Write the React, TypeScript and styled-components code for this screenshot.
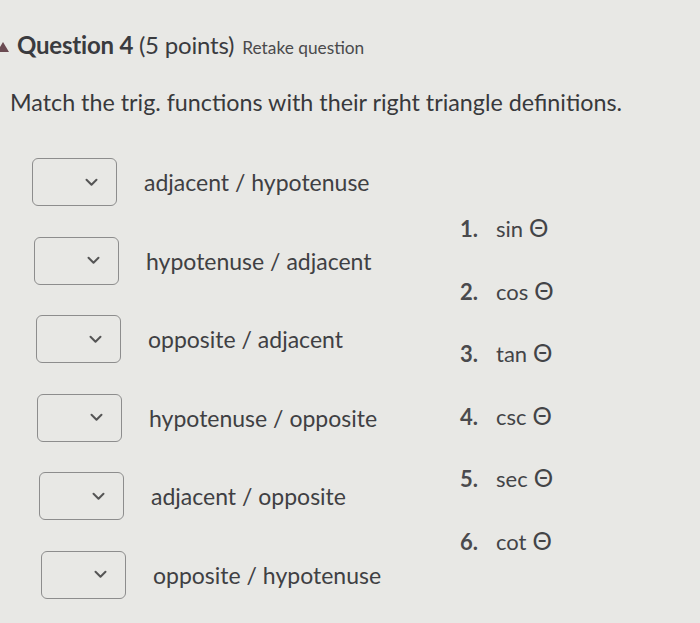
import React from "react";
import styled, { createGlobalStyle } from "styled-components";

const GlobalStyle = createGlobalStyle`
  html, body {
    margin: 0;
    padding: 0;
    background: #e8e8e5;
  }
  body {
    font-family: Lato, "Open Sans", sans-serif;
    color: #3d3d3f;
  }
`;

const Page = styled.div`
  width: 700px;
  height: 623px;
  overflow: hidden;
  padding-top: 30px;
  box-sizing: border-box;
`;

const Header = styled.div`
  display: flex;
  align-items: baseline;
  gap: 8px;
  height: 32px;
`;

const Marker = styled.span`
  width: 0;
  height: 0;
  border-left: 6px solid transparent;
  border-right: 6px solid transparent;
  border-bottom: 10px solid #6b4b52;
  margin-left: -3px;
  align-self: center;
  margin-top: 2px;
`;

const Title = styled.h2`
  margin: 0;
  font-size: 24px;
  font-weight: 700;
  color: #3a3b3f;
  letter-spacing: -0.2px;
`;

const Points = styled.span`
  font-weight: 400;
`;

const Retake = styled.span`
  font-size: 17.3px;
  color: #4a4a4c;
`;

const Prompt = styled.p`
  margin: 26px 0 0 10px;
  font-size: 23.3px;
  color: #38393c;
`;

const Body = styled.div`
  display: flex;
  margin-top: 42px;
`;

const Rows = styled.div`
  display: flex;
  flex-direction: column;
  gap: 30.6px;
  width: 440px;
`;

const Row = styled.div<{ $shift: number }>`
  display: flex;
  align-items: center;
  gap: 27px;
  padding-left: ${(p) => 32 + p.$shift}px;
`;

const Select = styled.div`
  width: 85px;
  height: 48px;
  box-sizing: border-box;
  border: 1.5px solid #8d8d8d;
  border-radius: 6px;
  display: flex;
  align-items: center;
  justify-content: flex-end;
  padding-right: 18px;
`;

const Label = styled.span`
  font-size: 23px;
  color: #3f4043;
`;

const Options = styled.ol`
  list-style: none;
  margin: 57px 0 0 20px;
  padding: 0;
  display: flex;
  flex-direction: column;
  gap: 37.6px;
`;

const Option = styled.li`
  display: flex;
  align-items: baseline;
  gap: 6px;
  font-size: 22px;
  line-height: 25px;
  height: 25px;
  color: #434447;
`;

const Num = styled.span`
  font-weight: 700;
  width: 30px;
  color: #4a4a4d;
`;

const Theta = styled.span`
  font-size: 1.1em;
  line-height: 25px;
`;

function Chevron() {
  return (
    <svg width="13" height="9" viewBox="0 0 13 9">
      <path
        d="M1.5 1.8 L6.5 6.8 L11.5 1.8"
        fill="none"
        stroke="#555"
        strokeWidth="2"
        strokeLinecap="round"
        strokeLinejoin="round"
      />
    </svg>
  );
}

const definitions = [
  "adjacent / hypotenuse",
  "hypotenuse / adjacent",
  "opposite / adjacent",
  "hypotenuse / opposite",
  "adjacent / opposite",
  "opposite / hypotenuse",
];

const functions = ["sin", "cos", "tan", "csc", "sec", "cot"];

export default function App() {
  return (
    <>
      <GlobalStyle />
      <Page>
        <Header>
          <Marker />
          <Title>
            Question 4 <Points>(5 points)</Points>
          </Title>
          <Retake>Retake question</Retake>
        </Header>
        <Prompt>Match the trig. functions with their right triangle definitions.</Prompt>
        <Body>
          <Rows>
            {definitions.map((d, i) => (
              <Row key={d} $shift={Math.round(i * 1.8)}>
                <Select>
                  <Chevron />
                </Select>
                <Label>{d}</Label>
              </Row>
            ))}
          </Rows>
          <Options>
            {functions.map((f, i) => (
              <Option key={f}>
                <Num>{i + 1}.</Num>
                <span>{f}</span>
                <Theta>Θ</Theta>
              </Option>
            ))}
          </Options>
        </Body>
      </Page>
    </>
  );
}
